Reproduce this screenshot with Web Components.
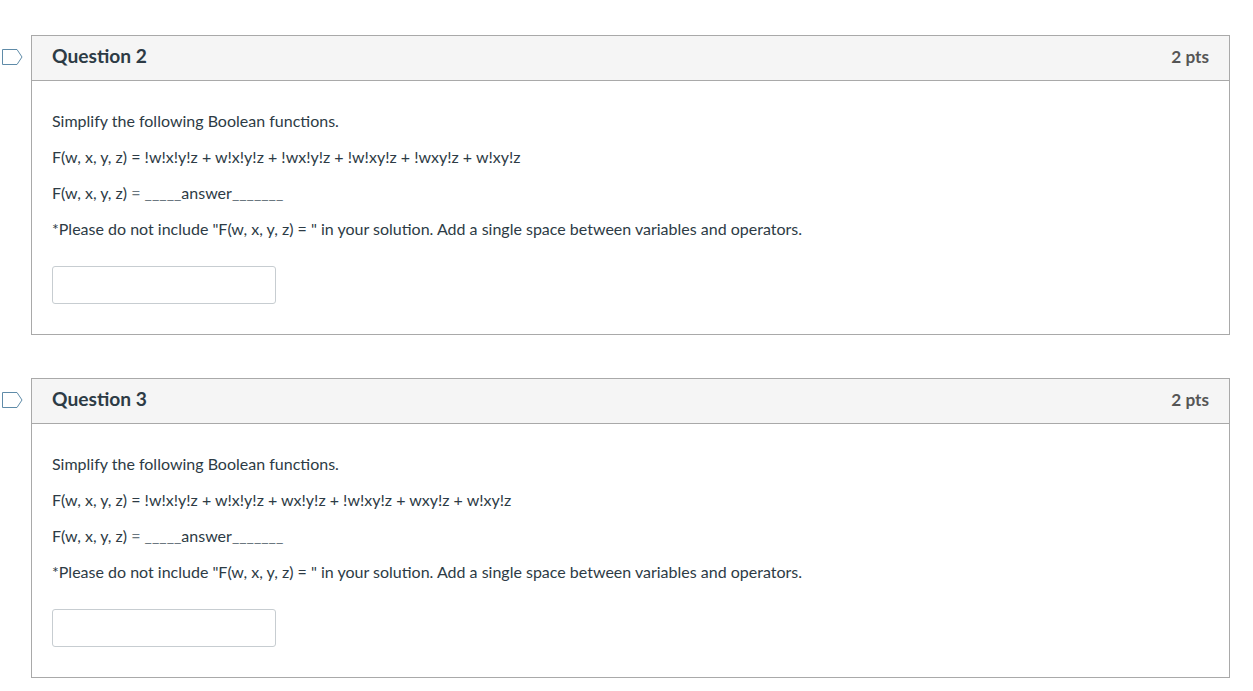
<!DOCTYPE html>
<html><head><meta charset="utf-8"><style>
html,body{margin:0;padding:0;background:#fff}
body{font-family:Lato,"Liberation Sans",sans-serif;color:#2d3b45;font-size:16px}
quiz-list{display:block;padding:35px 23px 0 0}
</style></head><body>
<quiz-list>
<quiz-question>
<span slot="title">Question 2</span><span slot="pts">2 pts</span>
<p>Simplify the following Boolean functions.</p>
<p>F(w, x, y, z) = !w!x!y!z + w!x!y!z + !wx!y!z + !w!xy!z + !wxy!z + w!xy!z</p>
<p>F(w, x, y, z) <span class="eq">=</span> <span class="u">_____</span>answer<span class="u">_______</span></p>
<p>*Please do not include "F(w, x, y, z) = " in your solution. Add a single space between variables and operators.</p>
</quiz-question>
<quiz-question>
<span slot="title">Question 3</span><span slot="pts">2 pts</span>
<p>Simplify the following Boolean functions.</p>
<p>F(w, x, y, z) = !w!x!y!z + w!x!y!z + wx!y!z + !w!xy!z + wxy!z + w!xy!z</p>
<p>F(w, x, y, z) <span class="eq">=</span> <span class="u">_____</span>answer<span class="u">_______</span></p>
<p>*Please do not include "F(w, x, y, z) = " in your solution. Add a single space between variables and operators.</p>
</quiz-question>
</quiz-list>
<style>
quiz-question p{margin:0 0 16px;line-height:20px;height:20px;white-space:nowrap}
quiz-question .eq{color:#6b7780}
quiz-question .u{color:#6b7780}
</style>
<script>
const t=document.createElement('template');
t.innerHTML=`<style>
:host{display:flex;align-items:flex-start;margin-bottom:43px}
.flag{width:31px;height:44px;flex:none;display:flex;align-items:center}
.flag svg{display:block;margin-left:2px}
.card{flex:1;border:1px solid #a9a9a9;box-sizing:border-box;height:300px;display:flex;flex-direction:column}
header{height:45px;flex:none;box-sizing:border-box;background:#f5f5f5;border-bottom:1px solid #a9a9a9;display:flex;justify-content:space-between;align-items:center;padding:0 20px 3px}
.title{font-size:19.2px;font-weight:700;color:#2d3b45;margin-top:-2px}
.pts{font-size:17.2px;font-weight:700;color:#555}
.body{padding:30px 20px 0;flex:1}
.in{display:block;width:224px;height:38px;box-sizing:border-box;border:1px solid #c7cdd1;border-radius:3px;background:#fff;margin-top:27px}
</style>
<div class="flag"><svg width="21" height="16" viewBox="0 0 21 16"><path d="M.5.5H15L20 8 15 15.5H.5Z" fill="#fff" stroke="#5f8ba8"/></svg></div>
<div class="card"><header><span class="title"><slot name="title"></slot></span><span class="pts"><slot name="pts"></slot></span></header>
<div class="body"><slot></slot><input class="in" type="text" aria-label="answer"></div></div>`;
customElements.define('quiz-question',class extends HTMLElement{constructor(){super();this.attachShadow({mode:'open'}).appendChild(t.content.cloneNode(true))}});
customElements.define('quiz-list',class extends HTMLElement{constructor(){super();this.attachShadow({mode:'open'}).innerHTML='<slot></slot>'}});
</script>
</body></html>
